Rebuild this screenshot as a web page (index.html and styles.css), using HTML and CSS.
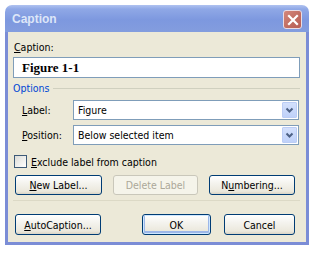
FILE: index.html
```html
<!DOCTYPE html>
<html lang="en">
<head>
    <meta charset="UTF-8">
    <title>Caption</title>
    <link rel="stylesheet" href="styles.css">
</head>
<body>
    <div class="window">
        <div class="titlebar">
            <span class="title">Caption</span>
            <span class="close">
                <svg width="12" height="12" viewBox="0 0 12 12"><path d="M2 2 L10 10 M10 2 L2 10" stroke="#fff" stroke-width="2.2" stroke-linecap="square"/></svg>
            </span>
        </div>
        <div class="client">
            <div class="caption-label"><u>C</u>aption:</div>
            <div class="textbox">Figure 1-1</div>

            <div class="group"><span>Options</span><span class="rule"></span></div>

            <div class="field-row">
                <span class="lbl"><u>L</u>abel:</span>
                <div class="combo">Figure<span class="drop"><svg width="9" height="7" viewBox="0 0 9 7"><path d="M1.5 1.5 L4.5 4.5 L7.5 1.5" fill="none" stroke="#4d6185" stroke-width="2"/></svg></span></div>
            </div>
            <div class="field-row second">
                <span class="lbl"><u>P</u>osition:</span>
                <div class="combo">Below selected item<span class="drop"><svg width="9" height="7" viewBox="0 0 9 7"><path d="M1.5 1.5 L4.5 4.5 L7.5 1.5" fill="none" stroke="#4d6185" stroke-width="2"/></svg></span></div>
            </div>

            <div class="check"><span class="box"></span><span><u>E</u>xclude label from caption</span></div>

            <div class="btn-row first">
                <button class="btn w88"><u>N</u>ew Label...</button>
                <button class="btn w86" disabled>Delete Label</button>
                <button class="btn w87">N<u>u</u>mbering...</button>
            </div>
            <div class="sep"></div>
            <div class="btn-row last">
                <button class="btn w87"><u>A</u>utoCaption...</button>
                <button class="btn ok">OK</button>
                <button class="btn cancel">Cancel</button>
            </div>
        </div>
    </div>
</body>
</html>
```

FILE: styles.css
```css
body {
    margin: 0;
    background: #fff;
    font-family: "DejaVu Sans Condensed", "Liberation Sans", sans-serif;
    font-size: 10.5px;
    color: #000;
}

u {
    text-decoration: underline;
    text-underline-offset: 1px;
}

.window {
    margin: 5px 0 0 5px;
    width: 304px;
    display: flex;
    flex-direction: column;
}

.titlebar {
    height: 27px;
    box-sizing: border-box;
    border-radius: 7px 7px 0 0;
    background: linear-gradient(#b0c2f0, #8fa8e6 15%, #7d98df 55%, #839dde);
    display: flex;
    align-items: center;
    justify-content: space-between;
    padding: 0 7px 0 7px;
}

.title {
    color: #dde6f8;
    font: bold 12px "Liberation Sans", sans-serif;
    margin-top: 1px;
}

.close {
    width: 19px;
    height: 19px;
    margin-top: 2px;
    box-sizing: border-box;
    border: 1px solid #e9dce4;
    border-radius: 3px;
    background: linear-gradient(135deg, #d4877c, #c06b60 60%, #b85e55);
    display: flex;
    align-items: center;
    justify-content: center;
}

.client {
    background: #ece9d8;
    border: 3px solid #7b8dd6;
    border-top: 0;
    padding-bottom: 7px;
}

.caption-label {
    margin: 9px 0 0 6px;
    line-height: 13px;
}

.textbox {
    margin: 3px 6px 0 5px;
    height: 21px;
    box-sizing: border-box;
    border: 1px solid #7f9db9;
    background: #fff;
    font: bold 13px "Liberation Serif", serif;
    line-height: 19px;
    padding-left: 8px;
}

.group {
    display: flex;
    align-items: center;
    margin: 4px 6px 0 5px;
    height: 12px;
    color: #0046d5;
}

.group .rule {
    flex: 1;
    border-top: 1px solid #d0d0bf;
    margin-left: 4px;
}

.field-row {
    display: flex;
    align-items: center;
    margin: 6px 7px 0 14px;
    height: 20px;
}

.field-row.second {
    margin-top: 5px;
}

.lbl {
    width: 51px;
}

.combo {
    flex: 1;
    height: 20px;
    box-sizing: border-box;
    border: 1px solid #7f9db9;
    background: #fff;
    padding-left: 4px;
    display: flex;
    align-items: center;
    justify-content: space-between;
}

.drop {
    width: 15px;
    height: 16px;
    margin-right: 1px;
    box-sizing: border-box;
    border: 1px solid #bccdf5;
    border-radius: 1px;
    background: linear-gradient(#d3e0fc, #bfd1f9);
    display: flex;
    align-items: center;
    justify-content: center;
}

.check {
    display: flex;
    align-items: center;
    gap: 4px;
    margin: 10px 0 0 6px;
    height: 13px;
}

.box {
    width: 13px;
    height: 13px;
    box-sizing: border-box;
    border: 1px solid #3d5a78;
    background: linear-gradient(135deg, #dcdcd7, #fff);
}

.btn-row {
    display: flex;
    margin: 7px 0 0 7px;
}

.btn-row.last {
    margin-top: 13px;
}

.sep {
    margin: 5px 6px 0 5px;
    border-top: 1px solid #dcd9c6;
}

.btn {
    height: 20px;
    box-sizing: border-box;
    border: 1px solid #003c74;
    border-radius: 3px;
    background: linear-gradient(#fff, #f4f3ee 40%, #ebe8dc 85%, #d9d4c6);
    font: inherit;
    color: #000;
    padding: 0;
    margin-right: 11px;
}

.btn-row.last .btn {
    height: 21px;
}

.btn:disabled {
    border-color: #c9c7ba;
    background: #f5f4ea;
    color: #aca899;
}

.w88 { width: 88px; }
.w86 { width: 86px; }
.w87 { width: 87px; }

.ok {
    width: 70px;
    margin-left: 30px;
    margin-right: 13px;
    box-shadow: inset 0 0 0 1px #cee7ff, inset 0 -1px 0 2px #9db7e8;
}

.cancel {
    width: 72px;
}
```
